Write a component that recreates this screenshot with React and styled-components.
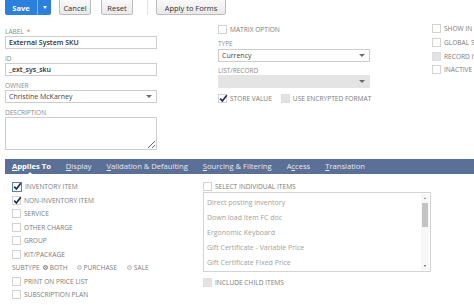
import React from "react";
import styled, { createGlobalStyle } from "styled-components";

const Global = createGlobalStyle`
  html, body { margin: 0; padding: 0; background: #fff; }
  body { font-family: "Open Sans", "DejaVu Sans", sans-serif; }
  * { box-sizing: border-box; }
`;

const Page = styled.div`
  width: 474px;
  height: 305px;
  overflow: hidden;
  background: #fff;
`;

/* ---------- toolbar ---------- */
const Toolbar = styled.div`
  display: flex;
  align-items: flex-start;
  padding-left: 5px;
  margin-top: -3px;
  height: 18px;
`;

const SaveGroup = styled.div`
  display: flex;
  width: 46px;
  height: 18px;
  background: #2b80de;
  border-radius: 2px;
  color: #fff;
`;

const SaveMain = styled.div`
  width: 32px;
  display: flex;
  align-items: center;
  justify-content: center;
  padding-top: 3px;
  font-size: 7.5px;
  font-weight: 700;
`;

const SaveArrow = styled.div`
  flex: 1;
  display: flex;
  align-items: center;
  justify-content: center;
  padding-top: 3px;
  border-left: 1px solid rgba(255, 255, 255, 0.45);
`;

const WhiteCaret = styled.span`
  width: 0;
  height: 0;
  border-left: 2.5px solid transparent;
  border-right: 2.5px solid transparent;
  border-top: 3px solid #fff;
`;

const Button = styled.div`
  width: ${(p) => p.$w}px;
  height: 18px;
  margin-left: ${(p) => p.$ml}px;
  padding-top: 3px;
  display: flex;
  align-items: center;
  justify-content: center;
  border: 1px solid #bcbcbc;
  border-radius: 2px;
  background: linear-gradient(#fbfbfb, #e9e9e9);
  color: #333;
  font-size: 7.5px;
`;

const ToolDivider = styled.div`
  width: 1px;
  height: 18px;
  margin-left: 14px;
  background: #e2e2e2;
`;

/* ---------- main form ---------- */
const Form = styled.div`
  display: grid;
  grid-template-columns: 152px 152px 1fr;
  column-gap: 61px;
  padding-left: 5px;
  margin-top: 7px;
`;

const Column = styled.div`
  display: flex;
  flex-direction: column;
  padding-top: ${(p) => p.$pt || 0}px;
  padding-left: ${(p) => p.$pl || 0}px;
  min-width: 0;
`;

const FieldLabel = styled.div`
  height: 8px;
  line-height: 8px;
  font-size: 6.5px;
  color: #8a8a8a;
  text-transform: uppercase;
  margin-top: ${(p) => p.$mt || 0}px;
  margin-bottom: ${(p) => p.$mb || 0}px;
  white-space: nowrap;
`;

const Req = styled.span`
  color: #e8793f;
  margin-left: 3px;
`;

const TextBox = styled.div`
  height: 13px;
  border: 1px solid #cdcdcd;
  padding-left: 3px;
  display: flex;
  align-items: center;
  font-size: 7px;
  font-weight: 600;
  color: #2e2e2e;
  white-space: nowrap;
`;

const SelectBox = styled.div`
  height: 13px;
  border: 1px solid ${(p) => (p.$disabled ? "#e4e4e4" : "#cdcdcd")};
  background: ${(p) => (p.$disabled ? "#e4e4e4" : "#fff")};
  padding: 0 4px 0 3px;
  display: flex;
  align-items: center;
  justify-content: space-between;
  font-size: 7px;
  color: #444;
  white-space: nowrap;
`;

const DarkCaret = styled.span`
  width: 0;
  height: 0;
  border-left: 3px solid transparent;
  border-right: 3px solid transparent;
  border-top: 3.5px solid #6a6a6a;
`;

const TextArea = styled.textarea`
  display: block;
  width: 152px;
  height: 33px;
  border: 1px solid #cdcdcd;
  margin: 0;
  padding: 2px;
  font-family: inherit;
  font-size: 7px;
  resize: both;
  outline: none;
`;

/* ---------- checkboxes / radios ---------- */
const CheckRow = styled.div`
  display: flex;
  align-items: center;
  gap: ${(p) => (p.$gap != null ? p.$gap : 3)}px;
  height: ${(p) => p.$h || 10}px;
  margin-top: ${(p) => p.$mt || 0}px;
  font-size: 6.6px;
  color: #7b7b7b;
  text-transform: uppercase;
  white-space: nowrap;
`;

const Box = styled.span`
  position: relative;
  flex: none;
  width: ${(p) => p.$size || 9}px;
  height: ${(p) => p.$size || 9}px;
  border: 1px solid ${(p) => (p.$focus ? "#5f7fbd" : p.$disabled ? "#dedede" : "#d2d2d2")};
  background: ${(p) => (p.$disabled ? "#e3e3e3" : "#fff")};
`;

const Tick = styled.svg`
  position: absolute;
  left: 0px;
  top: -1px;
  overflow: visible;
`;

const Check = ({ checked, focus, disabled, size }) => (
  <Box $focus={focus} $disabled={disabled} $size={size}>
    {checked && (
      <Tick width="9" height="9" viewBox="0 0 9 9">
        <path d="M1.2 4.6 L3.4 7 L7.8 1.2" fill="none" stroke="#1e2c52" strokeWidth="1.7" />
      </Tick>
    )}
  </Box>
);

const CheckLine = styled.div`
  display: flex;
  align-items: center;
  height: ${(p) => p.$h}px;
`;

const CheckLabel = styled.span`
  margin-left: ${(p) => p.$ml || 3}px;
`;

const Radio = styled.span`
  flex: none;
  width: 5px;
  height: 5px;
  border-radius: 50%;
  border: 1px solid ${(p) => (p.$on ? "#8f8f8f" : "#c2c2c2")};
  background: ${(p) => (p.$on ? "#6b6b6b" : "#c9c9c9")};
  box-shadow: inset 0 0 0 1px #f4f4f4;
  margin: 0 2px 0 ${(p) => p.$ml || 0}px;
`;

/* ---------- tabs ---------- */
const TabBar = styled.div`
  display: flex;
  align-items: center;
  gap: 15px;
  height: 15px;
  margin: 9px 0 0 5px;
  padding-left: 7px;
  background: #5b7096;
  color: #f3f5fa;
  font-size: 7.6px;
  white-space: nowrap;
`;

const Tab = styled.span`
  position: relative;
  font-weight: ${(p) => (p.$active ? 700 : 400)};
  color: ${(p) => (p.$active ? "#fff" : "#e6eaf2")};
  line-height: 15px;
`;

const Pointer = styled.span`
  position: absolute;
  left: 16px;
  bottom: 0;
  width: 0;
  height: 0;
  border-left: 2.5px solid transparent;
  border-right: 2.5px solid transparent;
  border-bottom: 2.5px solid #fff;
`;

/* ---------- tab content ---------- */
const Content = styled.div`
  display: grid;
  grid-template-columns: 191px 228px;
  padding: 6px 0 0 12px;
`;

const ItemList = styled.div`
  position: relative;
  height: 80px;
  margin-top: -1px;
  border: 1px solid #d4d4d4;
  padding: 2px 0 0 3px;
  overflow: hidden;
`;

const ListItem = styled.div`
  height: 15px;
  line-height: 15px;
  font-size: 7px;
  color: #a2a2a2;
  white-space: nowrap;
`;

const ScrollBar = styled.div`
  position: absolute;
  right: 1px;
  top: 1px;
  bottom: 1px;
  width: 8px;
  display: flex;
  flex-direction: column;
  align-items: center;
  background: #f7f7f7;
`;

const ScrollArrow = styled.span`
  width: 0;
  height: 0;
  margin: ${(p) => (p.$down ? "auto 0 3px" : "3px 0 0")};
  border-left: 1.5px solid transparent;
  border-right: 1.5px solid transparent;
  ${(p) => (p.$down ? "border-top: 2px solid #555;" : "border-bottom: 2px solid #888;")}
`;

const Thumb = styled.span`
  width: 6px;
  height: 24px;
  margin-top: 4px;
  background: #c3c3c3;
`;

const items = [
  "Direct posting inventory",
  "Down load Item FC doc",
  "Ergonomic Keyboard",
  "Gift Certificate - Variable Price",
  "Gift Certificate Fixed Price",
];

const leftItems = [
  { t: "Inventory Item", c: true, f: true },
  { t: "Non-Inventory Item", c: true },
  { t: "Service" },
  { t: "Other Charge" },
  { t: "Group" },
  { t: "Kit/Package" },
];

export default function App() {
  return (
    <Page>
      <Global />
      <Toolbar>
        <SaveGroup>
          <SaveMain>Save</SaveMain>
          <SaveArrow>
            <WhiteCaret />
          </SaveArrow>
        </SaveGroup>
        <Button $w={32} $ml={8}>Cancel</Button>
        <Button $w={32} $ml={10}>Reset</Button>
        <ToolDivider />
        <Button $w={70} $ml={8}>Apply to Forms</Button>
      </Toolbar>

      <Form>
        <Column $pt={6}>
          <FieldLabel>
            Label<Req>*</Req>
          </FieldLabel>
          <TextBox>External System SKU</TextBox>
          <FieldLabel $mt={6}>ID</FieldLabel>
          <TextBox>_ext_sys_sku</TextBox>
          <FieldLabel $mt={6}>Owner</FieldLabel>
          <SelectBox style={{ fontWeight: 400 }}>
            Christine McKarney
            <DarkCaret />
          </SelectBox>
          <FieldLabel $mt={6}>Description</FieldLabel>
          <TextArea readOnly />
        </Column>

        <Column $pt={2}>
          <CheckRow>
            <Check />
            Matrix Option
          </CheckRow>
          <FieldLabel $mt={6} $mb={1}>Type</FieldLabel>
          <SelectBox>
            Currency
            <DarkCaret />
          </SelectBox>
          <FieldLabel $mt={5}>List/Record</FieldLabel>
          <SelectBox $disabled>
            <span />
            <DarkCaret />
          </SelectBox>
          <CheckRow $mt={5}>
            <Check checked />
            Store Value
            <Box $disabled style={{ marginLeft: 6 }} />
            Use Encrypted Format
          </CheckRow>
        </Column>

        <Column $pl={1}>
          <CheckRow $h={13.7}>
            <Check />
            Show in List
          </CheckRow>
          <CheckRow $h={13.7}>
            <Check />
            Global Search
          </CheckRow>
          <CheckRow $h={13.7}>
            <Check disabled />
            Record is Parent
          </CheckRow>
          <CheckRow $h={13.7}>
            <Check />
            Inactive
          </CheckRow>
        </Column>
      </Form>

      <TabBar>
        <Tab $active>
          <u>A</u>pplies To
          <Pointer />
        </Tab>
        <Tab>
          <u>D</u>isplay
        </Tab>
        <Tab>
          <u>V</u>alidation &amp; Defaulting
        </Tab>
        <Tab>
          <u>S</u>ourcing &amp; Filtering
        </Tab>
        <Tab>
          A<u>c</u>cess
        </Tab>
        <Tab>
          <u>T</u>ranslation
        </Tab>
      </TabBar>

      <Content>
        <Column>
          {leftItems.map((it) => (
            <CheckRow key={it.t} $h={13.5}>
              <Check checked={it.c} focus={it.f} size={it.f ? 10 : 9} />
              {it.t}
            </CheckRow>
          ))}
          <CheckRow $h={13.5} $gap={0}>
            Subtype
            <Radio $on $ml={3} />
            Both
            <Radio $ml={9} />
            Purchase
            <Radio $ml={10} />
            Sale
          </CheckRow>
          <CheckRow $h={13.5}>
            <Check />
            Print on Price List
          </CheckRow>
          <CheckRow $h={13.5}>
            <Check />
            Subscription Plan
          </CheckRow>
        </Column>

        <Column>
          <CheckRow $h={13}>
            <Check />
            Select Individual Items
          </CheckRow>
          <ItemList>
            {items.map((t) => (
              <ListItem key={t}>{t}</ListItem>
            ))}
            <ScrollBar>
              <ScrollArrow />
              <Thumb />
              <ScrollArrow $down />
            </ScrollBar>
          </ItemList>
          <CheckRow $h={10} $mt={5}>
            <Check disabled />
            Include Child Items
          </CheckRow>
        </Column>
      </Content>
    </Page>
  );
}
